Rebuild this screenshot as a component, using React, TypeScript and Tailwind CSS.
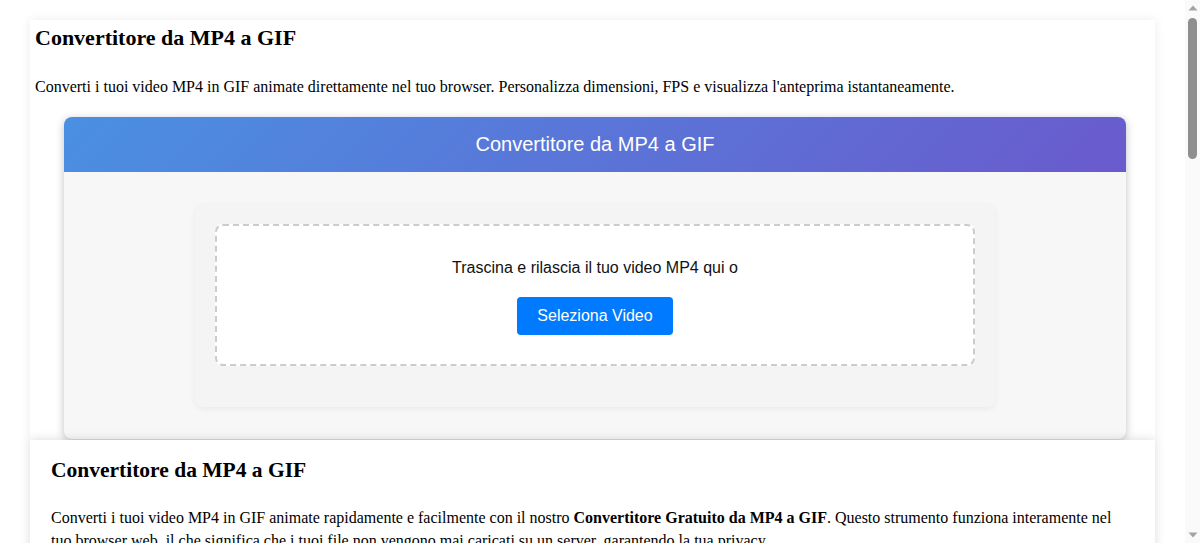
import React from "react";

function Scrollbar() {
  return (
    <div className="flex h-[543px] w-[15px] shrink-0 flex-col items-center bg-[#fafafa]">
      <svg width="10" height="6" viewBox="0 0 10 6" className="mt-[5px]">
        <polygon points="0.5,5.5 5,0.5 9.5,5.5" fill="#a3a3a3" />
      </svg>
      <div className="mt-[7px] h-[141px] w-[9px] rounded-full bg-[#8f8f8f]" />
      <div className="flex-1" />
      <svg width="10" height="6" viewBox="0 0 10 6" className="mb-[5px]">
        <polygon points="0.5,0.5 9.5,0.5 5,5.5" fill="#a3a3a3" />
      </svg>
    </div>
  );
}

export default function App() {
  const serif = { fontFamily: '"Liberation Serif", "Times New Roman", serif' };
  return (
    <div className="flex h-[543px] w-full overflow-hidden bg-white">
      <div className="min-w-0 flex-1 px-[30px] pt-[20px] pb-[20px] text-black" style={serif}>
        <div className="bg-white px-[5px] pt-[6px] pb-[1px] shadow-[0_0_10px_rgba(0,0,0,0.08)]">
          <h1 className="text-[22px] font-bold leading-[24px]">Convertitore da MP4 a GIF</h1>
          <p className="mt-[28px] text-[16px] leading-[18px]">
            Converti i tuoi video MP4 in GIF animate direttamente nel tuo browser. Personalizza dimensioni, FPS e
            visualizza l'anteprima istantaneamente.
          </p>
          <div
            className="ml-[29px] mt-[21px] w-[1062px] overflow-hidden rounded-lg bg-[#f7f7f7] shadow-[0_2px_8px_rgba(0,0,0,0.25)]"
            style={{ fontFamily: '"Liberation Sans", Arial, sans-serif' }}
          >
            <div className="bg-[linear-gradient(135deg,#4a90e2,#6a5acd)] py-[16px] text-center text-[20px] leading-[23px] text-white">
              Convertitore da MP4 a GIF
            </div>
            <div className="px-[20px] py-[32px]">
              <div className="mx-auto w-[800px] rounded-lg bg-[#f4f4f4] px-[20px] pt-[20px] pb-[41px] shadow-[0_2px_6px_rgba(0,0,0,0.06)]">
                <div className="flex flex-col items-center rounded-lg border-2 border-dashed border-[#cccccc] bg-white pt-[31px] pb-[29px]">
                  <p className="text-[16px] leading-[22px] text-[#111]">Trascina e rilascia il tuo video MP4 qui o</p>
                  <button className="mt-[18px] rounded-[4px] bg-[#007bff] px-[20px] py-[10px] text-[16px] leading-[18px] text-white">
                    Seleziona Video
                  </button>
                </div>
              </div>
            </div>
          </div>
        </div>
        <div className="relative bg-white px-[21px] pt-[18px] pb-[20px] shadow-[0_0_10px_rgba(0,0,0,0.15)]">
          <h2 className="text-[21.5px] font-bold leading-[24px]">Convertitore da MP4 a GIF</h2>
          <p className="mt-[24px] text-[16px] leading-[23px]">
            Converti i tuoi video MP4 in GIF animate rapidamente e facilmente con il nostro{" "}
            <strong>Convertitore Gratuito da MP4 a GIF</strong>. Questo strumento funziona interamente nel tuo browser
            web, il che significa che i tuoi file non vengono mai caricati su un server, garantendo la tua privacy.
          </p>
          <h3 className="mt-[24px] text-[19px] font-bold leading-[24px]">Come usare il convertitore</h3>
          <ol className="mt-[16px] list-decimal pl-[40px] text-[16px] leading-[23px]">
            <li>Trascina il tuo file MP4 nell'area di caricamento oppure fai clic su "Seleziona Video".</li>
            <li>Scegli le dimensioni e il numero di fotogrammi al secondo (FPS) desiderati.</li>
            <li>Visualizza l'anteprima della GIF generata.</li>
            <li>Scarica la tua GIF animata con un solo clic.</li>
          </ol>
        </div>
      </div>
      <Scrollbar />
    </div>
  );
}
